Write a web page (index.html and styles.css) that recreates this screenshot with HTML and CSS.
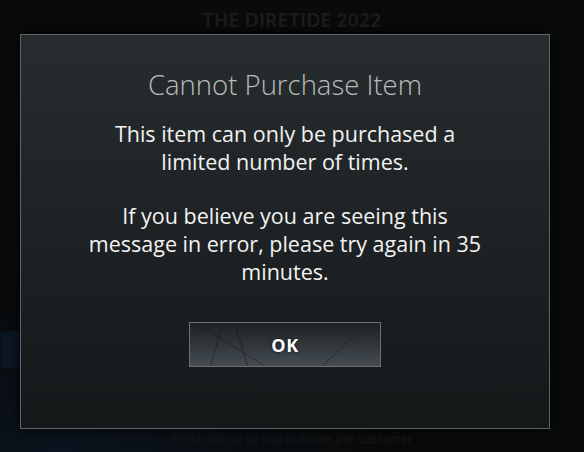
FILE: index.html
```html
<!DOCTYPE html>
<html>
<head>
<meta charset="utf-8">
<link rel="stylesheet" href="styles.css">
</head>
<body>
<div class="page">
  <div class="bg-title">THE DIRETIDE 2022</div>
  <div class="side-tab"></div>
  <div class="bg-note">Purchase up to two bundles per customer</div>
  <div class="dialog">
    <h1 class="title">Cannot Purchase Item</h1>
    <div class="message">
      <p>This item can only be purchased a<br>limited number of times.</p>
      <p>If you believe you are seeing this<br>message in error, please try again in 35<br>minutes.</p>
    </div>
    <button class="ok">
      <svg class="ok-lines" viewBox="0 0 192 45" preserveAspectRatio="none">
        <path d="M8 1 L74 44 M33 0 L21 45 M45 0 L58 45 M179 0 L134 45" stroke="#14171a" stroke-width="1" fill="none" opacity="0.55"/>
      </svg>
      <span>OK</span>
    </button>
  </div>
</div>
</body>
</html>
```
FILE: styles.css
```css
* { box-sizing: border-box; }
html, body { margin: 0; padding: 0; }
body {
  width: 584px;
  height: 452px;
  overflow: hidden;
  background: #090a0a;
  font-family: "Open Sans", "Noto Sans", sans-serif;
}
.page {
  position: relative;
  width: 584px;
  height: 452px;
  background:
    radial-gradient(ellipse 320px 170px at 60px 452px, #0b131e 0%, rgba(9,10,10,0) 100%),
    #090a0a;
}
.bg-title {
  position: absolute;
  top: 9px;
  left: 0;
  width: 584px;
  text-align: center;
  font-family: "Lato", sans-serif;
  font-weight: 900;
  font-size: 18px;
  letter-spacing: 0.7px;
  color: #1b1c1d;
}
.side-tab {
  position: absolute;
  left: 1px;
  top: 331px;
  width: 24px;
  height: 37px;
  background: #0c1623;
  border-radius: 2px;
}
.bg-note {
  position: absolute;
  top: 430px;
  left: 0;
  width: 584px;
  text-align: center;
  font-size: 12px;
  font-weight: 600;
  color: #141616;
}
.dialog {
  position: absolute;
  left: 20px;
  top: 34px;
  width: 530px;
  height: 395px;
  border: 1px solid #5e6567;
  background: linear-gradient(to bottom, #272c2e 0%, #1e2224 50%, #151819 100%);
  box-shadow: 0 0 12px rgba(0,0,0,0.8);
  display: flex;
  flex-direction: column;
  align-items: center;
  color: #fff;
}
.title {
  margin: 32px 0 0;
  font-weight: 300;
  font-size: 27.5px;
  line-height: 36px;
  color: #b9bcbd;
}
.message {
  margin-top: 17px;
  text-align: center;
  font-size: 21.5px;
  line-height: 28px;
  font-weight: 500;
  color: #f2f2f2;
}
.message p { margin: 0 0 26px; }
.message p:last-child { margin-bottom: 0; }
.ok {
  position: relative;
  margin-top: 36px;
  width: 192px;
  height: 45px;
  border: 1px solid #6b7072;
  background: linear-gradient(to bottom, #1e2225 0%, #30363a 50%, #454d53 100%);
  display: flex;
  align-items: center;
  justify-content: center;
  padding: 0;
  overflow: hidden;
}
.ok-lines {
  position: absolute;
  inset: 0;
  width: 100%;
  height: 100%;
}
.ok span {
  position: relative;
  font-family: "Open Sans", sans-serif;
  font-weight: 700;
  font-size: 18px;
  color: #fff;
  letter-spacing: 0.5px;
  text-shadow: 0 0 3px rgba(0,0,0,0.8);
}
```
